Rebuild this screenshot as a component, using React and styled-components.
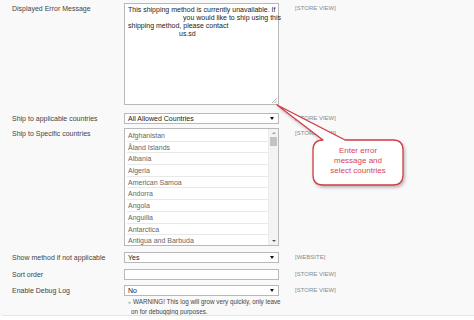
import React from "react";
import styled, { createGlobalStyle } from "styled-components";

const GlobalStyle = createGlobalStyle`
  * { box-sizing: border-box; }
  body {
    margin: 0;
    background: #ffffff;
    font-family: "Liberation Sans", Arial, sans-serif;
  }
`;

const Panel = styled.div`
  position: relative;
  width: 474px;
  height: 316px;
  padding-top: 3px;
  background: #f9f9f9;
  border-bottom: 1px solid #e6e6e6;
  border-bottom-left-radius: 4px;
  overflow: hidden;
`;

const Row = styled.div`
  display: grid;
  grid-template-columns: 112px 155px 1fr;
  align-items: start;
  padding-left: 12px;
  margin-top: ${(p) => p.gap || 0}px;
`;

const Label = styled.div`
  font-size: 7px;
  line-height: 11px;
  color: #444;
  white-space: nowrap;
`;

const Scope = styled.div`
  padding-left: 16px;
  font-size: 6px;
  line-height: 11px;
  color: #8a8a8a;
  white-space: nowrap;
`;

const TextArea = styled.div`
  position: relative;
  height: 102px;
  padding: 2px 3px;
  background: #fff;
  border: 1px solid #b9b9b9;
  font-size: 7px;
  line-height: 8px;
  color: #222;
`;

const TextLine = styled.div`
  padding-left: ${(p) => p.indent || 0}px;
  white-space: nowrap;
`;

const Grip = styled.svg`
  position: absolute;
  right: 1px;
  bottom: 1px;
`;

const Select = styled.div`
  display: flex;
  align-items: center;
  justify-content: space-between;
  height: 11px;
  padding: 0 4px 0 3px;
  background: #fff;
  border: 1px solid #b9b9b9;
  font-size: 7px;
  color: #222;
`;

const Arrow = styled.span`
  width: 0;
  height: 0;
  border-left: 2px solid transparent;
  border-right: 2px solid transparent;
  border-top: 3px solid #111;
`;

const Input = styled.div`
  height: 11px;
  background: #fff;
  border: 1px solid #b9b9b9;
`;

const ListBox = styled.div`
  display: flex;
  height: 118px;
  background: #fff;
  border: 1px solid #b9b9b9;
  overflow: hidden;
`;

const Options = styled.div`
  flex: 1;
  padding: 1px 0 0 2px;
`;

const Option = styled.div`
  height: 11.7px;
  padding-left: 1px;
  border-bottom: 1px solid #e8e8e8;
  font-size: 7px;
  line-height: 11px;
  color: #666;
  white-space: nowrap;
`;

const ScrollBar = styled.div`
  display: flex;
  flex-direction: column;
  align-items: center;
  width: 10px;
  padding: 2px 1px;
  background: #f3f3f3;
  border-left: 1px solid #ececec;
`;

const ScrollArrow = styled.span`
  width: 0;
  height: 0;
  border-left: 2px solid transparent;
  border-right: 2px solid transparent;
  ${(p) =>
    p.up
      ? "border-bottom: 2px solid #a0a0a0; margin-top: 1px;"
      : "border-top: 2px solid #555; margin-top: auto; margin-bottom: 1px;"}
`;

const Thumb = styled.div`
  width: 7px;
  height: 9px;
  margin-top: 3px;
  background: #c3c3c3;
`;

const Note = styled.div`
  grid-column: 2;
  margin-top: 1px;
  padding-left: 7px;
  text-indent: -3px;
  font-size: 6.3px;
  line-height: 9px;
  color: #444;
  white-space: nowrap;
`;

const Bullet = styled.span`
  display: inline-block;
  width: 5px;
  text-indent: 0;
  font-size: 5px;
  color: #7a9a5a;
`;

const CalloutShape = styled.svg`
  position: absolute;
  left: 0;
  top: 0;
  pointer-events: none;
`;

const CalloutText = styled.div`
  position: absolute;
  left: 313px;
  top: 146px;
  width: 90px;
  text-align: center;
  font-size: 8px;
  line-height: 10px;
  color: #d8444f;
`;

const countries = [
  "Afghanistan",
  "Åland Islands",
  "Albania",
  "Algeria",
  "American Samoa",
  "Andorra",
  "Angola",
  "Anguilla",
  "Antarctica",
  "Antigua and Barbuda",
];

const Dropdown = ({ value }) => (
  <Select>
    <span>{value}</span>
    <Arrow />
  </Select>
);

export default function App() {
  return (
    <Panel>
      <GlobalStyle />
      <Row>
        <Label>Displayed Error Message</Label>
        <TextArea>
          <TextLine>This shipping method is currently unavailable. If</TextLine>
          <TextLine indent={55}>you would like to ship using this</TextLine>
          <TextLine>shipping method, please contact</TextLine>
          <TextLine indent={51}>us.sd</TextLine>
          <Grip width="6" height="6" viewBox="0 0 6 6">
            <path d="M1 6 L6 1 M3.5 6 L6 3.5" stroke="#9a9a9a" strokeWidth="0.7" />
          </Grip>
        </TextArea>
        <Scope>[STORE VIEW]</Scope>
      </Row>
      <Row gap={8}>
        <Label>Ship to applicable countries</Label>
        <Dropdown value="All Allowed Countries" />
        <Scope>[STORE VIEW]</Scope>
      </Row>
      <Row gap={4}>
        <Label>Ship to Specific countries</Label>
        <ListBox>
          <Options>
            {countries.map((c) => (
              <Option key={c}>{c}</Option>
            ))}
          </Options>
          <ScrollBar>
            <ScrollArrow up />
            <Thumb />
            <ScrollArrow />
          </ScrollBar>
        </ListBox>
        <Scope>[STORE VIEW]</Scope>
      </Row>
      <Row gap={6}>
        <Label>Show method if not applicable</Label>
        <Dropdown value="Yes" />
        <Scope>[WEBSITE]</Scope>
      </Row>
      <Row gap={6}>
        <Label>Sort order</Label>
        <Input />
        <Scope>[STORE VIEW]</Scope>
      </Row>
      <Row gap={5}>
        <Label>Enable Debug Log</Label>
        <Dropdown value="No" />
        <Scope>[STORE VIEW]</Scope>
        <Note>
          <Bullet>»</Bullet>WARNING! This log will grow very quickly, only leave
          <br />
          on for debugging purposes.
        </Note>
      </Row>

      <CalloutShape width="474" height="320" viewBox="0 0 474 320">
        <defs>
          <filter id="sh" x="-20%" y="-20%" width="150%" height="150%">
            <feDropShadow dx="1.5" dy="2" stdDeviation="1.5" floodColor="#000" floodOpacity="0.25" />
          </filter>
        </defs>
        <path
          d="M323 140 L277 105 L345 140 L393 140 Q403 140 403 150 L403 175 Q403 185 393 185 L323 185 Q313 185 313 175 L313 150 Q313 140 323 140 Z"
          fill="#ffffff"
          stroke="#cf3d45"
          strokeWidth="1.3"
          strokeLinejoin="round"
          filter="url(#sh)"
        />
      </CalloutShape>
      <CalloutText>
        Enter error
        <br />
        message and
        <br />
        select countries
      </CalloutText>
    </Panel>
  );
}
